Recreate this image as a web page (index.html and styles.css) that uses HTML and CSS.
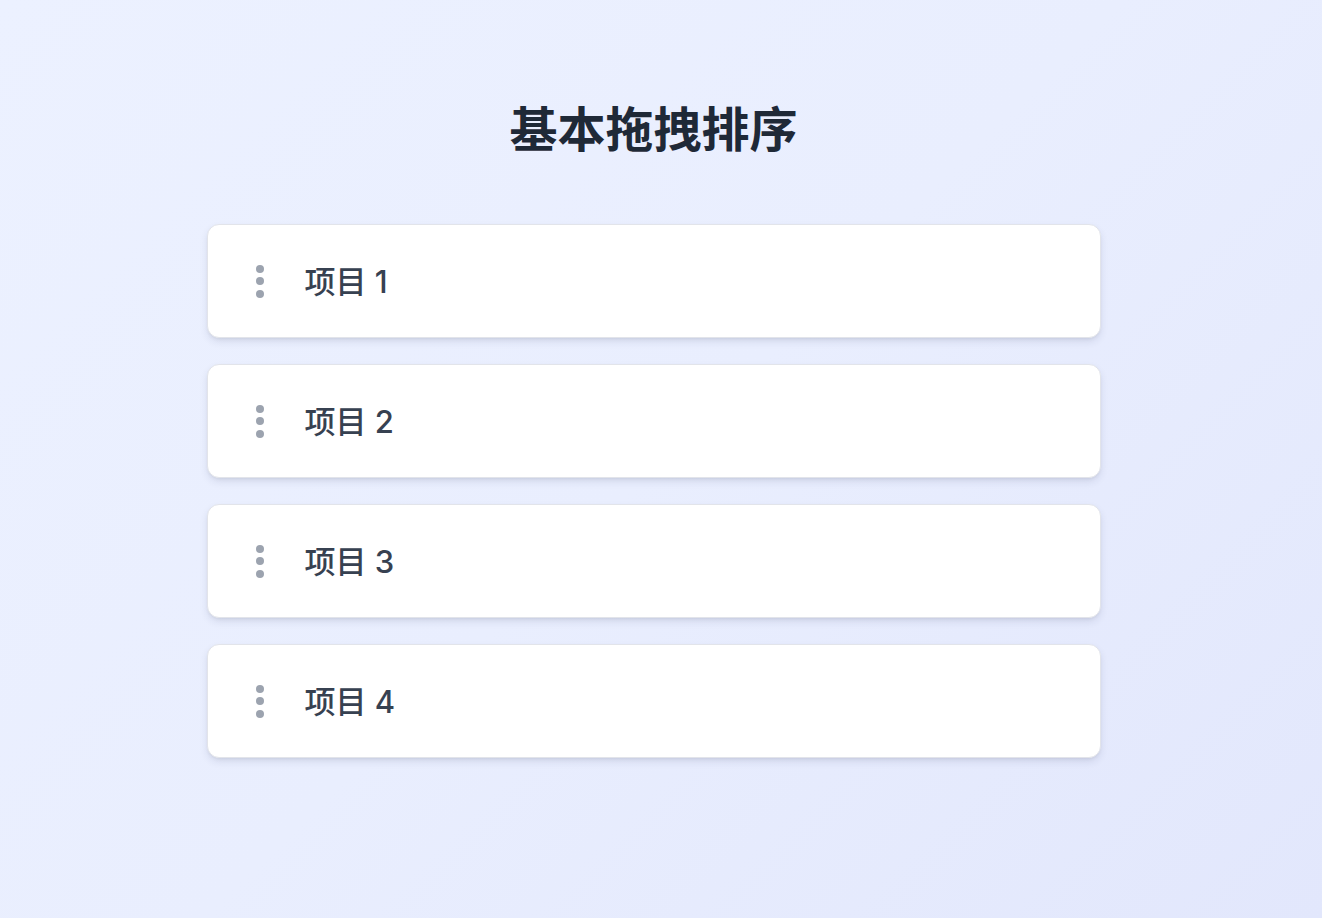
FILE: index.html
```html
<!DOCTYPE html>
<html lang="zh-CN">
<head>
<meta charset="utf-8">
<title>基本拖拽排序</title>
<link rel="stylesheet" href="styles.css">
</head>
<body>
<main class="page">
  <h1 class="title">基本拖拽排序</h1>
  <ul class="sort-list">
    <li class="sort-item">
      <span class="handle"><i></i><i></i><i></i></span>
      <span class="label">项目 1</span>
    </li>
    <li class="sort-item">
      <span class="handle"><i></i><i></i><i></i></span>
      <span class="label">项目 2</span>
    </li>
    <li class="sort-item">
      <span class="handle"><i></i><i></i><i></i></span>
      <span class="label">项目 3</span>
    </li>
    <li class="sort-item">
      <span class="handle"><i></i><i></i><i></i></span>
      <span class="label">项目 4</span>
    </li>
  </ul>
</main>
</body>
</html>
```

FILE: styles.css
```css
* { box-sizing: border-box; }

html, body {
  margin: 0;
  height: 100%;
}

body {
  background: linear-gradient(135deg, #ecf1ff 0%, #e9eefe 50%, #e2e7fc 100%);
  font-family: Inter, "Noto Sans CJK SC", sans-serif;
  color: #374151;
  padding-right: 15px;
}

.page {
  width: 894px;
  margin: 0 auto;
  padding-top: 97px;
}

.title {
  margin: 0;
  text-align: center;
  font-family: "Noto Sans CJK SC", sans-serif;
  font-size: 48px;
  line-height: 58px;
  font-weight: 700;
  color: #1f2937;
}

.sort-list {
  list-style: none;
  margin: 69px 0 0;
  padding: 0;
  display: flex;
  flex-direction: column;
  gap: 26px;
}

.sort-item {
  height: 114px;
  display: flex;
  align-items: center;
  gap: 41px;
  padding: 0 48px;
  background: #fff;
  border: 1px solid #e2e4ea;
  border-radius: 12px;
  box-shadow: 0 4px 8px -1px rgba(30, 40, 80, 0.12), 0 2px 4px -2px rgba(0, 0, 0, 0.1);
}

.handle {
  display: flex;
  flex-direction: column;
  gap: 4.5px;
}

.handle i {
  display: block;
  width: 8px;
  height: 8px;
  border-radius: 50%;
  background: #9ca3af;
}

.label {
  font-family: Inter, "Noto Sans CJK SC", sans-serif;
  font-size: 31px;
  font-weight: 500;
  color: #374151;
  line-height: 1;
}
```
